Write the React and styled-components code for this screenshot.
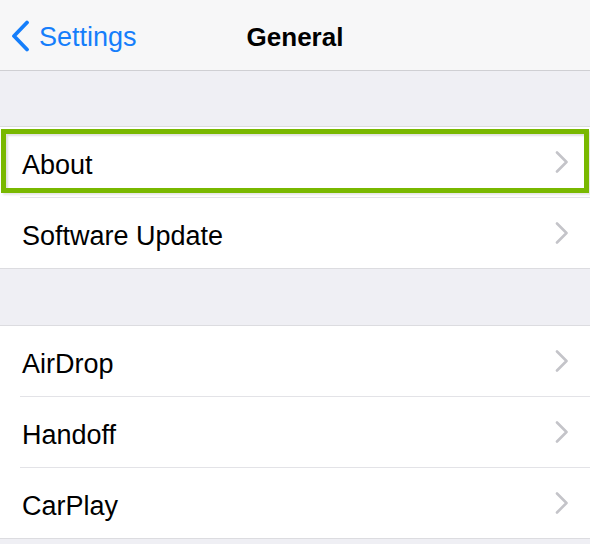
import React from "react";
import styled, { createGlobalStyle } from "styled-components";

const Global = createGlobalStyle`
  html, body { margin: 0; padding: 0; background: #efeff4; }
  body { font-family: "Liberation Sans", Arial, sans-serif; -webkit-font-smoothing: antialiased; }
  * { box-sizing: border-box; }
`;

const Page = styled.div`
  width: 590px;
  height: 544px;
  background: #efeff4;
  overflow: hidden;
`;

const NavBar = styled.header`
  height: 71px;
  background: #f7f7f8;
  border-bottom: 1px solid #cfcfd3;
  display: grid;
  grid-template-columns: 1fr auto 1fr;
  align-items: center;
  padding: 5px 0 0 0;
`;

const BackButton = styled.div`
  display: flex;
  align-items: center;
  gap: 8px;
  padding-left: 11px;
  color: #157efb;
  font-size: 27px;
  justify-self: start;
`;

const BackChevron = styled.svg`
  width: 20px;
  height: 32px;
  margin-top: -4px;
  flex: none;
`;

const Title = styled.h1`
  margin: 0;
  font-size: 26px;
  font-weight: 700;
  color: #000;
`;

const Gap = styled.div`
  height: ${(p) => p.$h}px;
`;

const Section = styled.section`
  background: #fff;
  border-top: 1px solid #dcdce0;
  border-bottom: 1px solid #dcdce0;
`;

const Row = styled.div`
  position: relative;
  height: 70px;
  display: flex;
  align-items: center;
  justify-content: space-between;
  padding: 6px 21px 0 22px;
  font-size: 27px;
  color: #000;
`;

const Divider = styled.div`
  height: 1px;
  margin-left: 20px;
  background: #e3e3e7;
`;

const Chevron = styled.svg`
  width: 14px;
  height: 22px;
  margin-top: -6px;
  flex: none;
`;

const Highlight = styled.div`
  position: absolute;
  top: 2px;
  left: 1px;
  right: 1px;
  bottom: 4px;
  border: 5px solid #79b800;
  box-shadow: inset 2px 2px 2px rgba(0, 0, 0, 0.12), 2px 2px 2px rgba(0, 0, 0, 0.1);
  pointer-events: none;
`;

const RowChevron = () => (
  <Chevron viewBox="0 0 14 22">
    <path d="M2 1.5 L11.5 11 L2 20.5" fill="none" stroke="#c4c4c9" strokeWidth="2.6" strokeLinecap="round" strokeLinejoin="round" />
  </Chevron>
);

const Item = ({ label, highlight }) => (
  <Row>
    <span>{label}</span>
    <RowChevron />
    {highlight && <Highlight />}
  </Row>
);

const sections = [
  [{ label: "About", highlight: true }, { label: "Software Update" }],
  [{ label: "AirDrop" }, { label: "Handoff" }, { label: "CarPlay" }],
];

export default function App() {
  return (
    <Page>
      <Global />
      <NavBar>
        <BackButton>
          <BackChevron viewBox="0 0 20 32">
            <path d="M16 2.5 L3 16 L16 29.5" fill="none" stroke="#157efb" strokeWidth="3.8" strokeLinecap="round" strokeLinejoin="round" />
          </BackChevron>
          <span>Settings</span>
        </BackButton>
        <Title>General</Title>
        <div />
      </NavBar>
      <Gap $h={55} />
      {sections.map((items, si) => (
        <React.Fragment key={si}>
          {si > 0 && <Gap $h={56} />}
          <Section>
            {items.map((it, i) => (
              <React.Fragment key={it.label}>
                {i > 0 && <Divider />}
                <Item {...it} />
              </React.Fragment>
            ))}
          </Section>
        </React.Fragment>
      ))}
    </Page>
  );
}
